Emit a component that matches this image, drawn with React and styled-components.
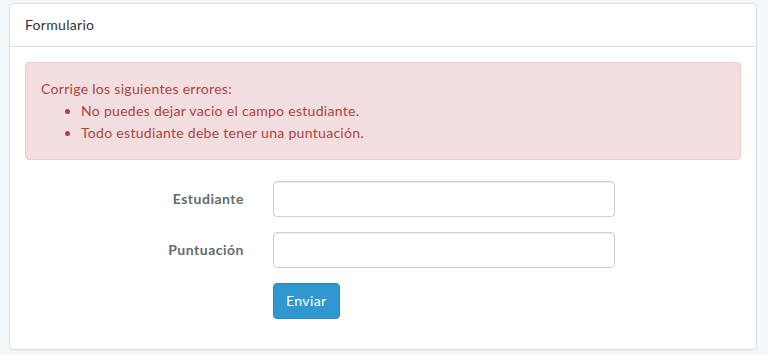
import React from 'react';
import styled, { createGlobalStyle } from 'styled-components';

const GlobalStyle = createGlobalStyle`
  * { box-sizing: border-box; }
  body {
    margin: 0;
    background: #f5f8fa;
    font-family: Lato, "Liberation Sans", sans-serif;
    font-size: 14px;
    line-height: 1.6;
    letter-spacing: 0.3px;
    color: #636b6f;
  }
`;

const Page = styled.div`
  padding: 3px 11px 5px 9px;
`;

const Panel = styled.div`
  background: #fff;
  border: 1px solid #d3e0e9;
  border-radius: 4px;
  box-shadow: 0 1px 1px rgba(0, 0, 0, 0.05);
`;

const PanelHeading = styled.div`
  padding: 10px 15px;
  height: 43px;
  border-bottom: 1px solid #d3e0e9;
  color: #333;
  font-size: 14px;
  line-height: 22px;
`;

const PanelBody = styled.div`
  padding: 15px;
`;

const Alert = styled.div`
  background: #f2dede;
  border: 1px solid #ebccd1;
  border-radius: 4px;
  color: #a94442;
  padding: 15px;
  margin-bottom: 21px;
  line-height: 22px;
`;

const ErrorList = styled.ul`
  margin: 0;
  padding-left: 40px;
`;

const FormGroup = styled.div`
  display: grid;
  grid-template-columns: 248px 372px;
  margin: 0 -15px 15px;
`;

const Label = styled.label`
  padding: 7px 14px 0 15px;
  text-align: right;
  font-weight: 700;
  letter-spacing: 0.5px;
  color: #636b6f;
`;

const Field = styled.div`
  padding: 0 15px;
  grid-column: ${p => (p.offset ? 2 : 'auto')};
`;

const Input = styled.input`
  display: block;
  width: 100%;
  height: 36px;
  padding: 6px 12px;
  font: inherit;
  border: 1px solid #ccd0d2;
  border-radius: 4px;
  box-shadow: inset 0 1px 1px rgba(0, 0, 0, 0.075);
  background: #fff;
`;

const Button = styled.button`
  height: 36px;
  padding: 6px 12px;
  font: inherit;
  letter-spacing: 0.4px;
  color: #fff;
  background: #3097d1;
  border: 1px solid #2a88bd;
  border-radius: 4px;
  cursor: pointer;
`;

export default function App() {
  return (
    <Page>
      <GlobalStyle />
      <Panel>
        <PanelHeading>Formulario</PanelHeading>
        <PanelBody>
          <Alert>
            Corrige los siguientes errores:
            <ErrorList>
              <li>No puedes dejar vacio el campo estudiante.</li>
              <li>Todo estudiante debe tener una puntuación.</li>
            </ErrorList>
          </Alert>
          <form onSubmit={e => e.preventDefault()}>
            <FormGroup>
              <Label htmlFor="estudiante">Estudiante</Label>
              <Field>
                <Input id="estudiante" type="text" />
              </Field>
            </FormGroup>
            <FormGroup>
              <Label htmlFor="puntuacion">Puntuación</Label>
              <Field>
                <Input id="puntuacion" type="text" />
              </Field>
            </FormGroup>
            <FormGroup>
              <Field offset>
                <Button type="submit">Enviar</Button>
              </Field>
            </FormGroup>
          </form>
        </PanelBody>
      </Panel>
    </Page>
  );
}
